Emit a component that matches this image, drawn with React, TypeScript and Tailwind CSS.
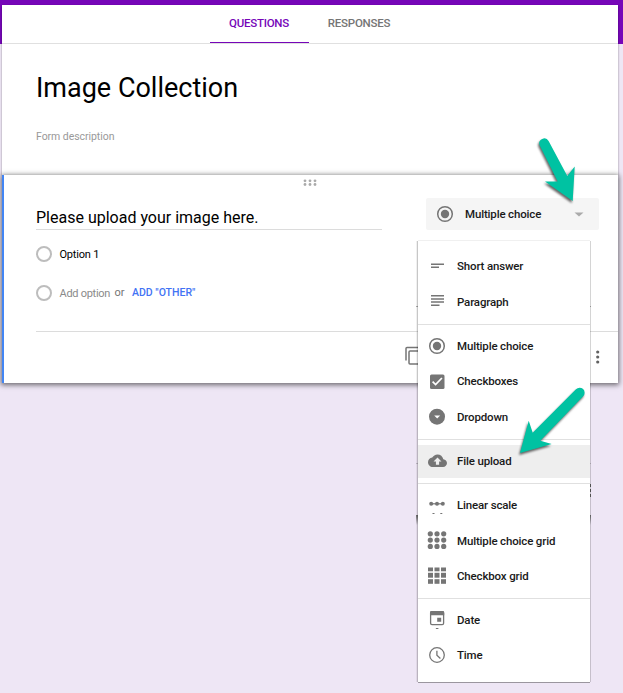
import type { ReactNode } from "react";
import { clsx } from "clsx";

type QuestionType = {
  label: string;
  icon: ReactNode;
  className: string;
};

const RadioIcon = () => (
  <svg width="18" height="18" viewBox="0 0 18 18">
    <circle cx="9" cy="9" r="7.3" fill="none" stroke="#757575" strokeWidth="1.5" />
    <circle cx="9" cy="9" r="4.2" fill="#757575" />
  </svg>
);

const ShortIcon = () => (
  <svg width="18" height="18" viewBox="0 0 18 18" fill="#757575">
    <path d="M3 6.6h13V8H3zM3 9.6h8V11H3z" />
  </svg>
);

const ParagraphIcon = () => (
  <svg width="18" height="18" viewBox="0 0 18 18" fill="#757575">
    <path d="M3 2.1h13v1.5H3zM3 5.2h13v1.5H3zM3 8.3h13v1.5H3zM3 11.6h8.5v1.5H3z" />
  </svg>
);

const CheckIcon = () => (
  <svg width="18" height="18" viewBox="0 0 18 18">
    <rect x="2" y="1.5" width="14.5" height="14.5" rx="1.5" fill="#757575" />
    <path d="M4.6 8.6l3 3 6.3-6.6" fill="none" stroke="#fff" strokeWidth="1.7" />
  </svg>
);

const DropdownIcon = () => (
  <svg width="18" height="18" viewBox="0 0 18 18">
    <circle cx="9" cy="8.7" r="8" fill="#757575" />
    <path d="M6.2 7.5h6L9.2 10.4z" fill="#fff" />
  </svg>
);

const UploadIcon = () => (
  <svg width="19" height="19" viewBox="0 0 24 24" fill="#757575">
    <path d="M19.35 9.04C18.67 5.59 15.64 3 12 3 9.11 3 6.6 4.64 5.35 7.04 2.34 7.36 0 9.91 0 13c0 3.31 2.69 6 6 6h13c2.76 0 5-2.24 5-5 0-2.64-2.05-4.78-4.65-4.96zM14 12v4h-4v-4H7l5-5 5 5h-3z" />
  </svg>
);

const ScaleIcon = () => (
  <svg width="18" height="18" viewBox="0 0 18 18" fill="#757575">
    <path d="M2 7.2h14v1.2H2z" />
    <circle cx="3.2" cy="7.8" r="2" />
    <circle cx="9" cy="7.8" r="2" />
    <circle cx="14.8" cy="7.8" r="2" />
    <path d="M4.5 17.1h2v.9h-2zM12.3 17.1h2v.9h-2z" />
  </svg>
);

const DotGridIcon = () => (
  <svg width="20" height="20" viewBox="0 0 20 20" fill="#757575">
    {[3.3, 10, 16.7].map((x) => (
      <g key={x}>
        <circle cx={x} cy="2.8" r="2.6" />
        <circle cx={x} cy="9.1" r="2.6" />
        <circle cx={x} cy="15.4" r="2.6" />
      </g>
    ))}
  </svg>
);

const BoxGridIcon = () => (
  <svg width="20" height="20" viewBox="0 0 20 20" fill="#757575">
    {[1, 7.5, 14].map((x) => (
      <g key={x}>
        <rect x={x} y=".5" width="5" height="3.8" />
        <rect x={x} y="5.8" width="5" height="4.9" />
        <rect x={x} y="12.2" width="5" height="4.6" />
      </g>
    ))}
  </svg>
);

const DateIcon = () => (
  <svg width="18" height="20" viewBox="0 0 18 20">
    <rect x="2.6" y="1.7" width="13" height="13" rx="1.4" fill="none" stroke="#757575" strokeWidth="1.3" />
    <path d="M2 2.4Q2 1 3.4 1h11.4q1.4 0 1.4 1.4V5.3H2zM9.2 7.7h4v4h-4zM7.6 19l.5-.9h2l.6.9z" fill="#757575" />
  </svg>
);

const TimeIcon = () => (
  <svg width="18" height="18" viewBox="0 0 18 18" fill="none" stroke="#757575" strokeWidth="1.3">
    <circle cx="9" cy="8" r="7.3" />
    <path d="M8.9 3.8v4.5l3.5 3.2" />
  </svg>
);

const groups: QuestionType[][] = [
  [
    { label: "Short answer", icon: <ShortIcon />, className: "h-9" },
    { label: "Paragraph", icon: <ParagraphIcon />, className: "h-9" },
  ],
  [
    { label: "Multiple choice", icon: <RadioIcon />, className: "h-9" },
    { label: "Checkboxes", icon: <CheckIcon />, className: "h-[35px]" },
    { label: "Dropdown", icon: <DropdownIcon />, className: "h-9" },
  ],
  [{ label: "File upload", icon: <UploadIcon />, className: "h-[33px] my-[2px] bg-[#eeeeee]" }],
  [
    { label: "Linear scale", icon: <ScaleIcon />, className: "h-9" },
    { label: "Multiple choice grid", icon: <DotGridIcon />, className: "h-9" },
    { label: "Checkbox grid", icon: <BoxGridIcon />, className: "h-[35px]" },
  ],
  [
    { label: "Date", icon: <DateIcon />, className: "h-9" },
    { label: "Time", icon: <TimeIcon />, className: "h-[35px]" },
  ],
];

const TypeMenu = () => (
  <div className="absolute left-[418px] top-[241px] h-[441px] w-[172px] bg-white pt-[7px] shadow-[-1px_0_0_0_rgba(0,0,0,0.17),1px_0_0_0_rgba(0,0,0,0.17),-2px_0_0_0_rgba(0,0,0,0.06),0_-1px_0_0_rgba(0,0,0,0.06),0_1px_0_0_rgba(0,0,0,0.35)]">
    {groups.map((group, index) => (
      <div
        key={index}
        className={clsx(index > 0 && "border-t border-[#e0e0e0] pt-[3px]", index < 4 && "pb-1", index === 2 && "pb-[3px]")}
      >
        {group.map((item) => (
          <div key={item.label} className={clsx("flex items-center", item.className)}>
            <div className="flex w-[39px] justify-center pr-px">{item.icon}</div>
            <span
              className={clsx(
                "whitespace-nowrap text-[11.5px] font-medium leading-4 tracking-[-0.16px] text-[#1a1a1a]",
                item.className !== "h-9" && "pb-[2px]",
              )}
            >
              {item.label}
            </span>
          </div>
        ))}
      </div>
    ))}
  </div>
);

// Edges of the cards stacked behind the open menu
const MenuBackdrop = () => (
  <div className="absolute left-[416px] top-[306px] w-[175px]">
    <div className="h-px bg-[#b0b0b0]" />
    <div className="mt-[156px] h-px bg-[#c4bec9]" />
    <div className="mt-[20px] flex flex-col items-end gap-[2px]">
      <span className="h-[3px] w-[1px] bg-[#616161]" />
      <span className="h-[3px] w-[1px] bg-[#616161]" />
      <span className="h-[3px] w-[1px] bg-[#616161]" />
    </div>
    <div className="mt-[18px] h-[10px] bg-linear-to-b from-[#6b6b6b] to-[#eee6f5]" />
  </div>
);

const OptionCircle = () => <span className="h-4 w-4 rounded-full border-2 border-[#bdbdbd]" />;

const Arrows = () => (
  <svg
    className="absolute left-0 top-0 drop-shadow-[-1px_2px_1px_rgba(0,0,0,0.6)]"
    width="623"
    height="693"
    fill="#00c2a2"
  >
    <path d="M539.5 145A5 5 0 0 1 548.6 141L567.3 176 574.7 166.5 572.7 201 545 181.5 557.7 181.5Z" />
    <path d="M576 389.2A5 5 0 0 1 583.2 396.2L540.3 440.7 551.7 444 520 453 528.7 420.7 532.7 432.7Z" />
  </svg>
);

const App = () => {
  return (
    <div className="relative h-[693px] w-[623px] overflow-hidden bg-[#eee6f5] font-['Roboto',sans-serif]">
      <div className="h-11 bg-[#7606b8] pt-[5px]">
        {/* Form header */}
        <div className="ml-[2px] h-[170px] w-[616px] bg-white shadow-[0_1px_2px_rgba(0,0,0,0.4)]">
          <div className="flex h-[39px] justify-center border-b border-[#e0e0e0] pr-[1px] text-[11.5px] font-medium tracking-[-0.25px]">
            <div className="flex h-[38px] w-[99px] items-center justify-center border-b border-[#7606b8] text-[#7606b8]">
              QUESTIONS
            </div>
            <div className="flex h-[38px] w-[101px] items-center justify-center text-[#757575]">RESPONSES</div>
          </div>
          <div className="pl-[34px]">
            <h1 className="pt-[26px] text-[27px] leading-9 text-black">Image Collection</h1>
            <p className="mt-[23px] text-[10.5px] leading-4 tracking-[-0.05px] text-[#999999]">Form description</p>
          </div>
        </div>

        {/* Question card */}
        <div className="relative ml-[2px] h-[208px] w-[616px] border-l-2 border-[#4285f4] bg-white shadow-[0_1px_5px_1px_rgba(0,0,0,0.55)]">
          <div className="flex justify-center pr-[2px] pt-[4px]">
            <svg width="14" height="7" fill="#aaaaaa">
              {[2, 7, 12].map((x) => (
                <g key={x}>
                  <circle cx={x} cy="1.8" r="1.4" />
                  <circle cx={x} cy="5.5" r="1.4" />
                </g>
              ))}
            </svg>
          </div>
          <div className="flex pl-8 pt-3">
            <div className="w-[346px]">
              <div className="h-8 border-b border-[#dcdcdc] pt-[8px] text-[16px] leading-[23px] text-black">
                Please upload your image here.
              </div>
              <div className="mt-4 flex h-4 items-center text-[11px] tracking-[-0.2px] text-black">
                <OptionCircle />
                <span className="ml-[7.5px] pt-[2px]">Option 1</span>
              </div>
              <div className="mt-[23px] flex h-4 items-center text-[11px] text-[#757575]">
                <OptionCircle />
                <span className="ml-[7.5px] w-[55px] pt-[2px] tracking-[-0.28px] text-[#8a8a8a]">Add option</span>
                <span className="w-[17.5px]">or</span>
                <span className="text-[10.5px] font-medium text-[#4273f4]">ADD "OTHER"</span>
              </div>
            </div>
            <div className="ml-11 flex h-8 w-[173px] items-center rounded-[2px] bg-[#f5f5f5] pl-[10px] pr-[15px]">
              <div className="pb-px">
                <RadioIcon />
              </div>
              <span className="ml-[11px] text-[11.5px] font-medium leading-4 tracking-[-0.16px] text-[#1a1a1a]">
                Multiple choice
              </span>
              <svg className="ml-auto mt-px" width="10" height="5" fill="#aaaaaa">
                <path d="M.5.5h9L5 4.5z" />
              </svg>
            </div>
          </div>
          <div className="ml-8 mt-[30px] flex h-[50px] w-[582px] items-center justify-between border-t border-[#dcdcdc] pl-[369px] pr-[18px]">
            <svg className="-mt-[2px]" width="20" height="20" fill="none" stroke="#757575" strokeWidth="1.5">
              <path d="M1 14.5V2.5Q1 1.5 2 1.5H13M5 5h12v13H5q-1 0-1-1V6q0-1 1-1z" />
            </svg>
            <svg width="4" height="14" fill="#616161">
              <circle cx="1.7" cy="2" r="1.6" />
              <circle cx="1.7" cy="7" r="1.6" />
              <circle cx="1.7" cy="12" r="1.6" />
            </svg>
          </div>
        </div>
      </div>
      <MenuBackdrop />
      <TypeMenu />
      <Arrows />
    </div>
  );
};

export default App;
